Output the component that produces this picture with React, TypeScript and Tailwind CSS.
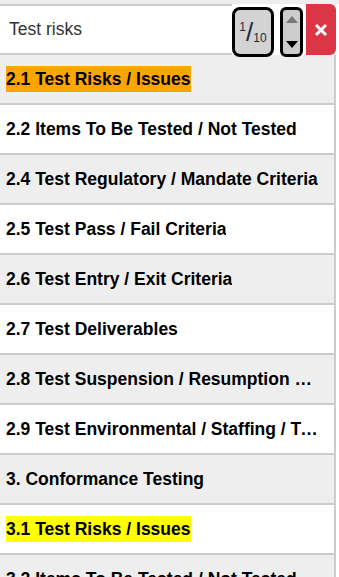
import React from "react";

const rows = [
  { label: "2.1 Test Risks / Issues", mark: "bg-[#ffa500]" },
  { label: "2.2 Items To Be Tested / Not Tested" },
  { label: "2.4 Test Regulatory / Mandate Criteria" },
  { label: "2.5 Test Pass / Fail Criteria" },
  { label: "2.6 Test Entry / Exit Criteria" },
  { label: "2.7 Test Deliverables" },
  { label: "2.8 Test Suspension / Resumption Criteria" },
  { label: "2.9 Test Environmental / Staffing / Training Needs" },
  { label: "3. Conformance Testing" },
  { label: "3.1 Test Risks / Issues", mark: "bg-[#ffff00]" },
  { label: "3.2 Items To Be Tested / Not Tested" },
];

function SearchBar() {
  return (
    <div className="bg-[#eee] pt-[4px]">
      <div className="flex h-[51px] bg-white">
        <div className="flex flex-1 items-center border-y-2 border-[#ccc] pl-[9px] text-[17.5px] text-[#333]">
          Test risks
        </div>
        <div className="relative z-10 mt-[3px] flex h-[50px] w-[42px] items-center justify-center rounded-[8px] border-[3px] border-black bg-[#d3d3d3] text-[#1e2a40]">
          <span className="-mt-[10px] text-[12px]">1</span>
          <span className="text-[26px] leading-none">/</span>
          <span className="mt-[12px] text-[12px]">10</span>
        </div>
        <div className="ml-[3px] flex w-[3px] bg-white" />
        <div className="relative z-10 mt-[3px] flex h-[50px] w-[23px] flex-col items-center justify-between rounded-[6px] border-[3px] border-black bg-[#ccc] py-[6px]">
          <svg width="12" height="7" viewBox="0 0 12 7">
            <path d="M0 7 L6 0 L12 7 Z" fill="#777" />
          </svg>
          <svg width="12" height="7" viewBox="0 0 12 7">
            <path d="M0 0 L12 0 L6 7 Z" fill="#000" />
          </svg>
        </div>
        <div className="ml-[3px] flex h-[51px] w-[30px] items-center justify-center rounded-r-[6px] bg-[#dc3545]">
          <svg width="14" height="14" viewBox="0 0 14 14">
            <path d="M2 2 L12 12 M12 2 L2 12" stroke="#fff" strokeWidth="3" />
          </svg>
        </div>
        <div className="w-[3px] bg-white" />
      </div>
    </div>
  );
}

export default function App() {
  return (
    <div className="h-[577px] w-[339px] overflow-hidden bg-white font-['Liberation_Sans',Arial,sans-serif]">
      <SearchBar />
      <ul className="w-[336px] border-r-2 border-[#ccc]">
        {rows.map((row, i) => (
          <li
            key={row.label}
            className={`flex h-[50px] items-center border-b-2 border-[#ccc] pl-[6px] pr-[16px] ${
              i % 2 === 0 ? "bg-[#eee]" : "bg-white"
            }`}
          >
            <span className="truncate text-[17.5px] font-bold text-black">
              {row.mark ? (
                <span className={`inline-block leading-[26px] ${row.mark}`}>{row.label}</span>
              ) : (
                row.label
              )}
            </span>
          </li>
        ))}
      </ul>
    </div>
  );
}
